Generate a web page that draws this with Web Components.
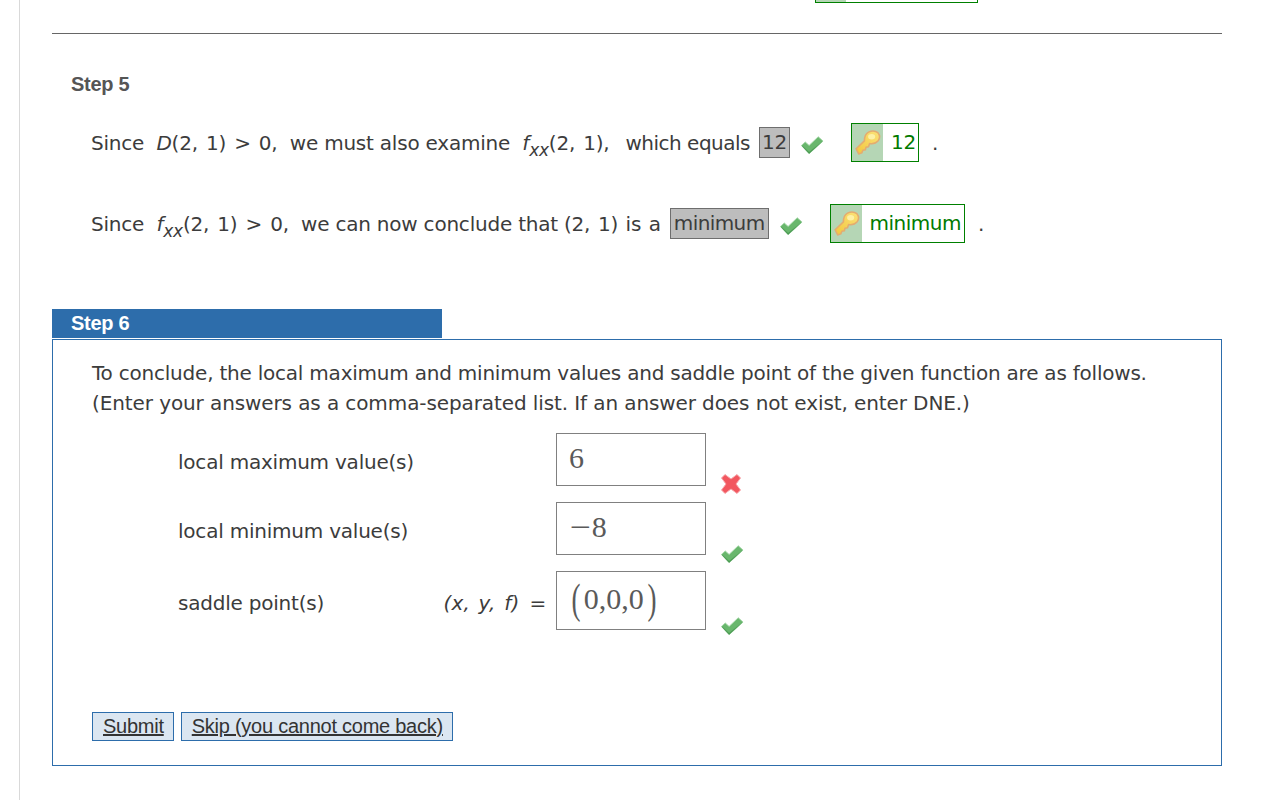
<!DOCTYPE html>
<html>
<head>
<meta charset="utf-8">
<title>Step 6</title>
<style>
  html, body { margin: 0; padding: 0; background: #fff; height: 800px; overflow: hidden; }
  body { font-family: "DejaVu Sans", Verdana, sans-serif; font-size: 20px; letter-spacing: -0.22px; color: #3c3c3c; }
</style>
</head>
<body>
<template id="check-tpl">
  <style>:host { display: inline-flex; width: 24px; height: 20px; } svg { display: block; }</style>
  <svg width="24" height="20" viewBox="0 0 25 23" preserveAspectRatio="none">
    <path d="M1.5 12 L5.5 8 L9.5 12 L19 2 L24 7 L9.5 21.5 Z" fill="#69b76d" stroke="#a5d8a8" stroke-width="1" stroke-linejoin="round"/>
    <path d="M3 13 L9.5 19.5 L23 7.5 L24 7 L9.5 21.5 L1.5 12.5 Z" fill="#4c9a54"/>
  </svg>
</template>
<template id="cross-tpl">
  <style>:host { display: inline-flex; width: 22px; height: 22px; } svg { display: block; }</style>
  <svg width="22" height="22" viewBox="0 0 22 22">
    <path d="M5 1.5 L11 6 L17 1.5 L20.5 5 L16 11 L20.5 17 L17 20.5 L11 16 L5 20.5 L1.5 17 L6 11 L1.5 5 Z" fill="#f2575f" stroke="#f8a4a9" stroke-width="1" stroke-linejoin="round"/>
  </svg>
</template>

<script>
function cloneTpl(host, id) {
  const root = host.attachShadow({ mode: 'open' });
  root.appendChild(document.getElementById(id).content.cloneNode(true));
  return root;
}

class CheckIcon extends HTMLElement {
  constructor() { super(); cloneTpl(this, 'check-tpl'); }
}
class CrossIcon extends HTMLElement {
  constructor() { super(); cloneTpl(this, 'cross-tpl'); }
}

class GradedValue extends HTMLElement {
  constructor() {
    super();
    this.attachShadow({ mode: 'open' }).innerHTML = `<style>
        :host { display: inline-flex; align-items: center; height: 29px; padding: 0 3px; margin-bottom: 2px; background: #bdbdbd; border: 1px solid #6e6e6e; color: #3c3c3c; white-space: normal; }
      </style><slot></slot>`;
  }
}

class KeyAnswer extends HTMLElement {
  constructor() {
    super();
    this.attachShadow({ mode: 'open' }).innerHTML = `<style>
        :host { display: inline-flex; align-items: stretch; height: 37px; margin-bottom: 2px; border: 1px solid #008000; color: #007a00; background: #fff; white-space: normal; }
        .key { width: 31px; background: #b5d6b5; display: flex; align-items: center; justify-content: center; }
        .val { display: flex; align-items: center; padding: 0 var(--val-pr, 3px) 0 8px; }
        svg { display: block; }
      </style><span class="key">
        <svg width="27" height="27" viewBox="0 0 26 26">
          <defs><linearGradient id="gold" x1="1" y1="0" x2="0" y2="1"><stop offset="0" stop-color="#fbe37a"/><stop offset="1" stop-color="#f2c53c"/></linearGradient></defs>
          <path d="M2 19 L10 11.5 Q10 5 14 3 Q19 0.5 23 3.5 Q26 7 23.5 11 Q20 15 15 14 L14 17 L11.5 17.5 L11 20 L8.5 20.5 L7.5 23 L4.5 24 Z" fill="url(#gold)" stroke="#e3ac70" stroke-width="1.5" stroke-linejoin="round"/>
          <ellipse cx="17" cy="7.5" rx="3.4" ry="2.6" fill="#fdf1a6"/>
        </svg>
      </span><span class="val"><slot></slot></span>`;
  }
}

class MathVar extends HTMLElement {
  constructor() {
    super();
    this.attachShadow({ mode: 'open' }).innerHTML = `<style>
        :host { display: inline; font-style: italic; white-space: normal; }
        sub { font-size: 0.85em; line-height: 0; vertical-align: -0.35em; }
      </style><slot></slot><sub><slot name="sub"></slot></sub>`;
  }
}

class StepLine extends HTMLElement {
  constructor() {
    super();
    this.attachShadow({ mode: 'open' }).innerHTML = `<style>
        :host { display: flex; align-items: center; white-space: pre; height: 40px; padding-left: 39px; }
      </style><slot></slot>`;
  }
}

class StepHeading extends HTMLElement {
  constructor() {
    super();
    this.attachShadow({ mode: 'open' }).innerHTML = `<style>
        :host { display: block; font: bold 20px "Liberation Sans", Arial, sans-serif; padding-left: 19px; line-height: 24px; color: #555; letter-spacing: -0.3px; }
        :host([active]) { width: 371px; background: #2d6dab; color: #fff; line-height: 29px; height: 29px; }
      </style><slot></slot>`;
  }
}

class AnswerRow extends HTMLElement {
  constructor() {
    super();
    this.attachShadow({ mode: 'open' }).innerHTML = `<style>
        :host { display: grid; grid-template-columns: 378px 150px auto; align-items: start; padding-left: 125px; }
        .lab { align-self: center; display: flex; justify-content: space-between; align-items: center; padding-right: 10px; padding-top: 4px; }
        .box { box-sizing: border-box; border: 1px solid #808080; height: var(--box-h, 53px); display: flex; align-items: center; padding-left: 12px; padding-bottom: 4px; font-family: "Liberation Serif", "Times New Roman", serif; font-size: 30px; color: #5a5a5a; white-space: pre; }
        .mark { padding-left: 14px; padding-top: var(--mark-top, 42px); height: 0; }
      </style><div class="lab"><span><slot name="label"></slot></span><span><slot name="prefix"></slot></span></div><div class="box"><slot></slot></div><div class="mark"><slot name="mark"></slot></div>`;
  }
}

class SkinButton extends HTMLElement {
  constructor() {
    super();
    this.attachShadow({ mode: 'open' }).innerHTML = `<style>
        :host { display: inline-flex; align-items: center; box-sizing: border-box; height: 29px; padding: 0 9px 0 10px; background: #dbe6f1; border: 1px solid #2d6dab; font: 20px "Liberation Sans", Arial, sans-serif; color: #333; text-decoration: underline; white-space: pre; letter-spacing: -0.25px; }
      </style><slot></slot>`;
  }
}

class QuestionPage extends HTMLElement {
  constructor() {
    super();
    this.attachShadow({ mode: 'open' }).innerHTML = `<style>
        :host { display: block; box-sizing: border-box; height: 800px; margin-left: 19px; border-left: 1px solid #d9d9d9; padding-left: 32px; width: 1203px; }
      </style><slot></slot>`;
  }
}

customElements.define('check-icon', CheckIcon);
customElements.define('cross-icon', CrossIcon);
customElements.define('graded-value', GradedValue);
customElements.define('key-answer', KeyAnswer);
customElements.define('math-var', MathVar);
customElements.define('step-line', StepLine);
customElements.define('step-heading', StepHeading);
customElements.define('answer-row', AnswerRow);
customElements.define('skin-button', SkinButton);
customElements.define('question-page', QuestionPage);
</script>

<question-page>
  <div style="height:3px;margin-left:763px;width:163px;box-sizing:border-box;border:1px solid #008000;border-top:0;background:linear-gradient(90deg,#b5d6b5 30px,#fff 30px)"></div>
  <div style="height:1px;background:#666;margin-top:30px"></div>
  <step-heading style="margin-top:38px">Step 5</step-heading>
  <step-line style="margin-top:27px">Since  <math-var>D</math-var><span style="word-spacing:2px">(2, 1) &gt; 0,</span>  we must also examine  <math-var>f<span slot="sub">xx</span></math-var><span style="word-spacing:2px">(2, 1),</span><span style="margin-left:16px;letter-spacing:-0.5px">which equals</span><graded-value style="margin-left:9px;padding:0 2px">12</graded-value><check-icon style="margin:4px 0 0 10px"></check-icon><key-answer style="margin-left:27px;--val-pr:2px">12</key-answer><span style="margin-left:13px">.</span></step-line>
  <step-line style="margin-top:41px">Since  <math-var>f<span slot="sub">xx</span></math-var><span style="word-spacing:2px">(2, 1) &gt; 0,</span>  we can now conclude that <span style="word-spacing:1.5px">(2, 1) is a</span><graded-value style="margin-left:9px;letter-spacing:-0.6px">minimum</graded-value><check-icon style="margin:4px 0 0 10px"></check-icon><key-answer style="margin-left:27px;letter-spacing:-0.5px">minimum</key-answer><span style="margin-left:13px">.</span></step-line>

  <step-heading active style="margin-top:65px">Step 6</step-heading>
  <div style="box-sizing:border-box;height:427px;border:1px solid #2d6dab;margin-top:1px;padding-top:18px">
    <div style="padding-left:39px;line-height:30px">To conclude, the local maximum and minimum values and saddle point of the given function are as follows.<br><span style="letter-spacing:-0.1px">(Enter your answers as a comma-separated list. If an answer does not exist, enter DNE.)</span></div>
    <answer-row style="margin-top:15px">
      <span slot="label">local maximum value(s)</span>
      <span>6</span>
      <cross-icon slot="mark" style="margin-top:-2px"></cross-icon>
    </answer-row>
    <answer-row style="margin-top:16px">
      <span slot="label">local minimum value(s)</span>
      <span style="display:inline-block;transform:scaleX(1.25);margin:0 3px 0 3px">−</span><span>8</span>
      <check-icon slot="mark"></check-icon>
    </answer-row>
    <answer-row style="margin-top:16px;--box-h:59px;--mark-top:45px">
      <span slot="label">saddle point(s)</span>
      <span slot="prefix"><span style="letter-spacing:0.2px;word-spacing:2px"><math-var>(x, y, f)</math-var></span><span style="margin-left:10px">=</span></span>
      <span style="transform:scale(0.9,1.4);margin:0 3px 0 2px">(</span><span style="letter-spacing:0">0,0,0</span><span style="transform:scale(0.9,1.4);margin-left:3px">)</span>
      <check-icon slot="mark"></check-icon>
    </answer-row>
    <div style="display:flex;gap:7px;padding-left:39px;margin-top:82px">
      <skin-button>Submit</skin-button>
      <skin-button>Skip (you cannot come back)</skin-button>
    </div>
  </div>
</question-page>
</body>
</html>
